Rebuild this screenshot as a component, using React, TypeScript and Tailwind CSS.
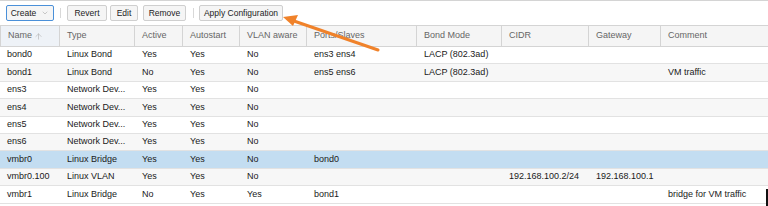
import { ArrowUp, ChevronDown } from 'lucide-react'

const columns = [
  { label: 'Name', width: 60 },
  { label: 'Type', width: 75 },
  { label: 'Active', width: 48 },
  { label: 'Autostart', width: 57 },
  { label: 'VLAN aware', width: 67 },
  { label: 'Ports/Slaves', width: 110 },
  { label: 'Bond Mode', width: 85 },
  { label: 'CIDR', width: 87 },
  { label: 'Gateway', width: 72 },
  { label: 'Comment', width: 107 },
]

const rows = [
  ['bond0', 'Linux Bond', 'Yes', 'Yes', 'No', 'ens3 ens4', 'LACP (802.3ad)', '', '', ''],
  ['bond1', 'Linux Bond', 'No', 'Yes', 'No', 'ens5 ens6', 'LACP (802.3ad)', '', '', 'VM traffic'],
  ['ens3', 'Network Dev...', 'Yes', 'Yes', 'No', '', '', '', '', ''],
  ['ens4', 'Network Dev...', 'Yes', 'Yes', 'No', '', '', '', '', ''],
  ['ens5', 'Network Dev...', 'Yes', 'Yes', 'No', '', '', '', '', ''],
  ['ens6', 'Network Dev...', 'Yes', 'Yes', 'No', '', '', '', '', ''],
  ['vmbr0', 'Linux Bridge', 'Yes', 'Yes', 'No', 'bond0', '', '', '', ''],
  ['vmbr0.100', 'Linux VLAN', 'Yes', 'Yes', 'No', '', '', '192.168.100.2/24', '192.168.100.1', ''],
  ['vmbr1', 'Linux Bridge', 'No', 'Yes', 'Yes', 'bond1', '', '', '', 'bridge for VM traffic'],
]

const gridCols = 'grid grid-cols-[60px_75px_48px_57px_67px_110px_85px_87px_72px_107px]'

function ToolButton({
  children,
  focused,
  className,
}: {
  children: React.ReactNode
  focused?: boolean
  className: string
}) {
  return (
    <button
      className={
        'flex h-[16px] shrink-0 items-center justify-center rounded-[2px] border bg-[#f5f5f5] text-[8.5px] text-[#222] ' +
        (focused ? 'border-[#4a90d9] ' : 'border-[#cfcfcf] ') +
        className
      }
    >
      {children}
    </button>
  )
}

function Separator({ className }: { className: string }) {
  return <div className={'h-[10px] w-px shrink-0 bg-[#d8d8d8] ' + className} />
}

export default function App() {
  return (
    <div
      className="relative h-[206px] w-[768px] overflow-hidden bg-white text-[9px]"
      style={{ fontFamily: '"Liberation Sans", Arial, sans-serif' }}
    >
      <div className="flex h-[26px] items-center border-y border-[#d4d4d4] pl-[6px]">
        <ToolButton focused className="w-[48px]">
          <span>Create</span>
          <ChevronDown className="ml-[5px] h-[8px] w-[8px] text-[#999]" strokeWidth={1.5} />
        </ToolButton>
        <Separator className="ml-[6px]" />
        <ToolButton className="ml-[6px] w-[40px]">Revert</ToolButton>
        <ToolButton className="ml-[3px] w-[28px]">Edit</ToolButton>
        <ToolButton className="ml-[5px] w-[43px]">Remove</ToolButton>
        <Separator className="ml-[7px]" />
        <ToolButton className="ml-[5px] w-[84px]">Apply Configuration</ToolButton>
      </div>

      <div className={gridCols + ' h-[21px] border-b border-[#d4d4d4] bg-[#f5f5f5] text-[#666]'}>
        {columns.map((c, i) => (
          <div
            key={c.label}
            className={
              'flex items-center border-r border-[#d4d4d4] pl-[7px] ' +
              (i === 0 ? 'bg-[#eef2f7] border-l' : '') +
              (i === columns.length - 1 ? ' border-r-0' : '')
            }
          >
            {c.label}
            {i === 0 && <ArrowUp className="ml-[2px] h-[9px] w-[9px] text-[#aaa]" strokeWidth={1.5} />}
          </div>
        ))}
      </div>

      {rows.map((r, idx) => (
        <div
          key={r[0]}
          className={
            gridCols +
            ' h-[17.4px] border-b border-[#e2e2e2] text-[#1a1a1a] ' +
            (idx === 6 ? 'bg-[#c3ddf1]' : idx % 2 === 1 ? 'bg-[#f7f7f7]' : 'bg-white')
          }
        >
          {r.map((cell, i) => (
            <div key={i} className="flex items-center overflow-hidden whitespace-nowrap pl-[7px]">
              {cell}
            </div>
          ))}
        </div>
      ))}

      <div className="absolute right-0 top-[189px] h-[17px] w-[2px] bg-[#111]" />

      <svg className="pointer-events-none absolute left-0 top-0" width="768" height="206">
        <line x1="378" y1="50" x2="294" y2="21" stroke="#f0822a" strokeWidth="3" strokeLinecap="round" />
        <polygon points="283,17 298,15 293,26" fill="#f0822a" />
      </svg>
    </div>
  )
}
